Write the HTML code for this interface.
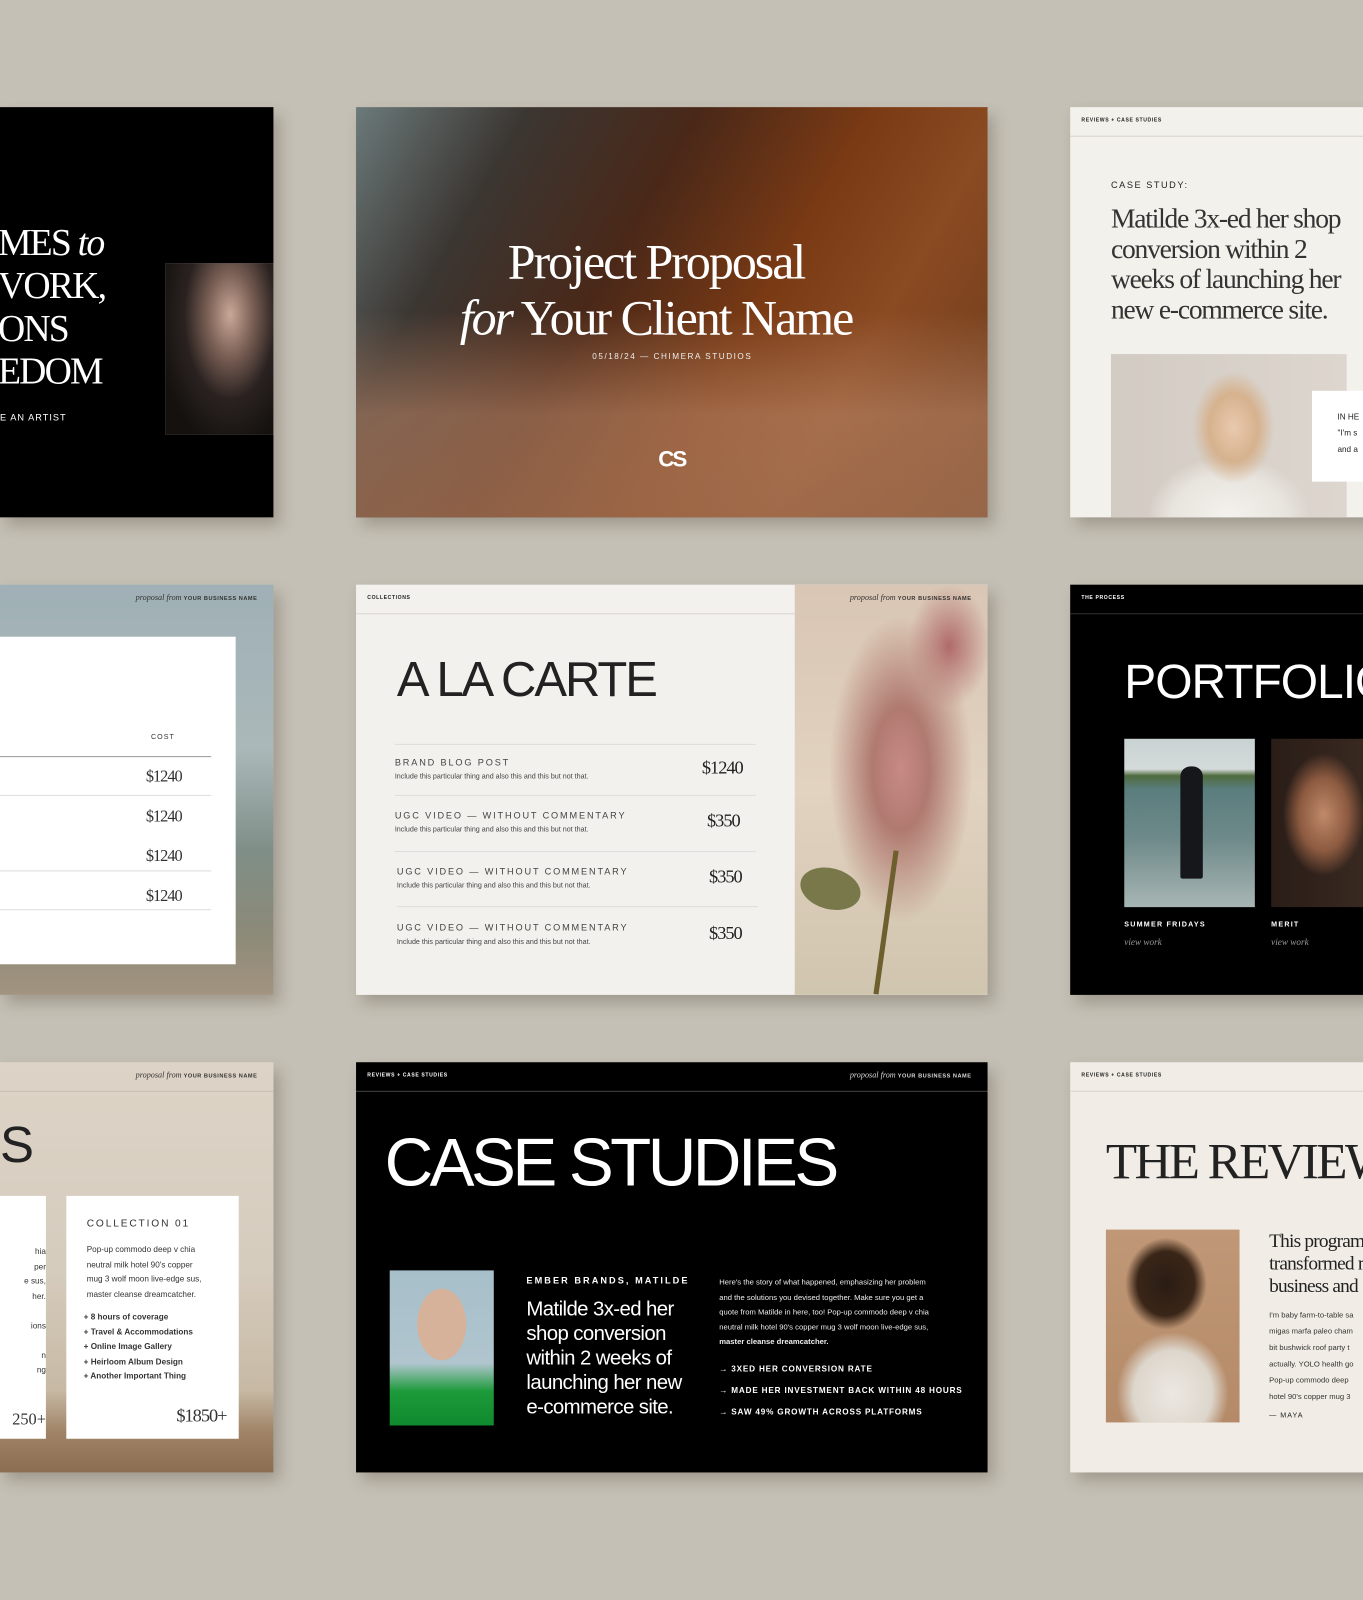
<!DOCTYPE html>
<html><head><meta charset="utf-8"><style>
*{margin:0;padding:0;box-sizing:border-box}
body{width:1363px;height:1600px;overflow:hidden;background:#c5c0b5;font-family:"Liberation Sans",sans-serif}
#w{position:absolute;left:0;top:0;width:1336px;height:1568px;transform:scale(1.0202,1.0204);transform-origin:0 0}
.c{position:absolute;overflow:hidden;box-shadow:6px 8px 14px rgba(60,50,40,.28)}
.a{position:absolute;white-space:nowrap}
.sf{font-family:"Liberation Serif",serif}
.t{font-size:6px;letter-spacing:.6px;font-weight:bold}
</style></head><body><div id="w">

<!-- A -->
<div class="c" style="left:0;top:105px;width:268px;height:402px;background:#000;color:#fff">
 <div class="a sf" style="left:-2px;top:113px;font-size:37px;line-height:42px;letter-spacing:-1.8px">MES <i>to</i><br>VORK,<br>ONS<br>EDOM</div>
 <div class="a" style="left:0;top:299px;font-size:9px;letter-spacing:1px">E AN ARTIST</div>
 <div class="a" style="left:162px;top:153px;width:106px;height:168px;background:radial-gradient(ellipse at 60% 30%,#c9a898 0,#7a5f55 25%,#2a2220 50%,#14110f 80%),#b7aca6"></div>
</div>

<!-- B -->
<div class="c" style="left:349px;top:105px;width:619px;height:402px;background:linear-gradient(120deg,#6b7a7a 0,#3b3632 20%,#4a2818 40%,#7a3a14 60%,#8a4a22 75%,#6a3a1c 100%)">
 <div class="a" style="left:0;top:200px;width:619px;height:202px;background:linear-gradient(180deg,rgba(0,0,0,0) 0,rgba(190,140,110,.55) 50%,rgba(170,120,90,.7) 100%)"></div>
 <div class="a sf" style="left:0;top:124px;width:588px;text-align:center;color:#fff;font-size:49px;line-height:55px;letter-spacing:-2px">Project Proposal<br><i>for</i> Your Client Name</div>
 <div class="a" style="left:0;top:240px;width:620px;text-align:center;color:#eee;font-size:8px;letter-spacing:1.5px">05/18/24 — CHIMERA STUDIOS</div>
 <div class="a" style="left:0;top:332px;width:619px;text-align:center;color:#fff;font-size:22px;font-weight:bold;letter-spacing:-2px">CS</div>
</div>

<!-- C -->
<div class="c" style="left:1049px;top:105px;width:300px;height:402px;background:#f3f1ec;color:#222">
 <div class="a t" style="left:11px;top:10px;font-size:5px">REVIEWS + CASE STUDIES</div>
 <div class="a" style="left:0;top:28px;width:300px;height:1px;background:#d6d2ca"></div>
 <div class="a" style="left:40px;top:71px;font-size:9px;letter-spacing:1.5px">CASE STUDY:</div>
 <div class="a sf" style="left:40px;top:95px;font-size:27px;line-height:29.5px;letter-spacing:-1.2px;color:#333">Matilde 3x-ed her shop<br>conversion within 2<br>weeks of launching her<br>new e-commerce site.</div>
 <div class="a" style="left:40px;top:242px;width:231px;height:160px;background:radial-gradient(ellipse 40px 55px at 52% 45%,#e9c9ae 0,#d6b28e 60%,rgba(0,0,0,0) 100%),radial-gradient(ellipse 80px 60px at 50% 100%,#f4f2ee 0,#e8e4de 70%,rgba(0,0,0,0) 100%),linear-gradient(90deg,#d2cbc3,#ddd6cf)"></div>
 <div class="a" style="left:237px;top:278px;width:60px;height:89px;background:#fff;font-size:8px;line-height:16px;padding:18px 0 0 25px">IN HE<br>"I'm s<br>and a</div>
</div>

<!-- D -->
<div class="c" style="left:0;top:573px;width:268px;height:402px;background:linear-gradient(180deg,#9fb0b6 0,#aab8b9 40%,#7f8e87 65%,#8c8a78 85%,#a29480 100%)">
 <div class="a sf" style="left:133px;top:8px;font-size:8px;color:#333"><i>proposal from</i> <span style="font-family:'Liberation Sans';font-size:5.5px;font-weight:bold;letter-spacing:.5px">YOUR BUSINESS NAME</span></div>
 <div class="a" style="left:0;top:51px;width:231px;height:321px;background:#fff;color:#333">
  <div class="a" style="left:148px;top:95px;font-size:7px;letter-spacing:1px">COST</div>
  <div class="a" style="left:0;top:117px;width:207px;height:1px;background:#999"></div>
  <div class="a" style="left:0;top:155px;width:207px;height:1px;background:#ddd"></div>
  <div class="a" style="left:0;top:229px;width:207px;height:1px;background:#ddd"></div>
  <div class="a" style="left:0;top:267px;width:207px;height:1px;background:#ddd"></div>
  <div class="a sf" style="left:143px;top:118px;font-size:16px;line-height:39px;letter-spacing:-1px">$1240<br>$1240<br>$1240<br>$1240</div>
 </div>
</div>

<!-- E -->
<div class="c" style="left:349px;top:573px;width:619px;height:402px;background:#f3f1ed;color:#222">
 <div class="a" style="left:430px;top:0;width:189px;height:402px;background:radial-gradient(ellipse 70px 150px at 55% 45%,#c88a86 0,#b07a70 40%,rgba(0,0,0,0) 100%),radial-gradient(ellipse 40px 60px at 80% 15%,#b06a6a,rgba(0,0,0,0)),linear-gradient(180deg,#d9c6b4 0,#e2d2c0 50%,#d0c5ae 100%)"></div>
 <div class="a" style="left:517px;top:260px;width:5px;height:142px;background:#6d5f2e;transform:rotate(8deg)"></div>
 <div class="a" style="left:435px;top:278px;width:60px;height:40px;border-radius:50%;background:#78784a;transform:rotate(15deg)"></div>
 <div class="a t" style="left:11px;top:10px;font-size:5px">COLLECTIONS</div>
 <div class="a" style="left:0;top:28px;width:430px;height:1px;background:#d9d5cd"></div>
 <div class="a sf" style="left:484px;top:8px;font-size:8px;color:#333"><i>proposal from</i> <span style="font-family:'Liberation Sans';font-size:5.5px;font-weight:bold;letter-spacing:.5px">YOUR BUSINESS NAME</span></div>
 <div class="a" style="left:40px;top:66px;font-size:48px;letter-spacing:-2px;font-weight:300">A LA CARTE</div>
 <div class="a" style="left:38px;top:156px;width:354px;height:1px;background:#ddd"></div>
 <div class="a" style="left:38px;top:206px;width:354px;height:1px;background:#ddd"></div>
 <div class="a" style="left:38px;top:261px;width:354px;height:1px;background:#ddd"></div>
 <div class="a" style="left:40px;top:315px;width:354px;height:1px;background:#ddd"></div>
 <div class="a" style="left:38px;top:169px;font-size:9px;letter-spacing:1.8px;color:#444">BRAND BLOG POST</div>
 <div class="a" style="left:38px;top:185px;font-size:7px;color:#444">Include this particular thing and also this and this but not that.</div>
 <div class="a sf" style="left:339px;top:169px;font-size:18px;letter-spacing:-1px">$1240</div>
 <div class="a" style="left:38px;top:221px;font-size:9px;letter-spacing:1.8px;color:#444">UGC VIDEO — WITHOUT COMMENTARY</div>
 <div class="a" style="left:38px;top:237px;font-size:7px;color:#444">Include this particular thing and also this and this but not that.</div>
 <div class="a sf" style="left:344px;top:221px;font-size:18px;letter-spacing:-1px">$350</div>
 <div class="a" style="left:40px;top:276px;font-size:9px;letter-spacing:1.8px;color:#444">UGC VIDEO — WITHOUT COMMENTARY</div>
 <div class="a" style="left:40px;top:292px;font-size:7px;color:#444">Include this particular thing and also this and this but not that.</div>
 <div class="a sf" style="left:346px;top:276px;font-size:18px;letter-spacing:-1px">$350</div>
 <div class="a" style="left:40px;top:331px;font-size:9px;letter-spacing:1.8px;color:#444">UGC VIDEO — WITHOUT COMMENTARY</div>
 <div class="a" style="left:40px;top:347px;font-size:7px;color:#444">Include this particular thing and also this and this but not that.</div>
 <div class="a sf" style="left:346px;top:331px;font-size:18px;letter-spacing:-1px">$350</div>
</div>

<!-- F -->
<div class="c" style="left:1049px;top:573px;width:300px;height:402px;background:#000;color:#fff">
 <div class="a t" style="left:11px;top:10px;font-size:5px">THE PROCESS</div>
 <div class="a" style="left:0;top:28px;width:300px;height:1px;background:#333"></div>
 <div class="a" style="left:53px;top:67px;font-size:47px;letter-spacing:-1px">PORTFOLIO</div>
 <div class="a" style="left:53px;top:151px;width:128px;height:165px;background:linear-gradient(180deg,#c9d2d2 0,#d4dada 18%,#4f6b3d 22%,#5a7d7e 30%,#6f8a8a 60%,#a7b6b4 100%)"></div>
 <div class="a" style="left:108px;top:178px;width:22px;height:110px;background:#15171a;border-radius:10px 10px 2px 2px"></div>
 <div class="a" style="left:197px;top:151px;width:103px;height:165px;background:radial-gradient(ellipse 40px 60px at 50% 45%,#c08a6a 0,#8c5a40 60%,rgba(0,0,0,0) 100%),linear-gradient(90deg,#2a1d17,#3a2a22)"></div>
 <div class="a" style="left:53px;top:330px;font-size:7px;letter-spacing:1.2px;font-weight:bold">SUMMER FRIDAYS</div>
 <div class="a sf" style="left:53px;top:345px;font-size:9px;color:#999"><i>view work</i></div>
 <div class="a" style="left:197px;top:330px;font-size:7px;letter-spacing:1.2px;font-weight:bold">MERIT</div>
 <div class="a sf" style="left:197px;top:345px;font-size:9px;color:#999"><i>view work</i></div>
</div>

<!-- G -->
<div class="c" style="left:0;top:1041px;width:268px;height:402px;background:linear-gradient(180deg,#ddd3c6 0,#d6ccbe 50%,#c7b9a4 80%,#a08468 90%,#8b6d52 100%)">
 <div class="a sf" style="left:133px;top:8px;font-size:8px;color:#333"><i>proposal from</i> <span style="font-family:'Liberation Sans';font-size:5.5px;font-weight:bold;letter-spacing:.5px">YOUR BUSINESS NAME</span></div>
 <div class="a" style="left:0;top:28px;width:268px;height:1px;background:#c8beb2"></div>
 <div class="a" style="left:0;top:52px;font-size:50px;color:#222">S</div>
 <div class="a" style="left:0;top:131px;width:45px;height:238px;background:#fff;font-size:8px;line-height:14.5px;color:#333;text-align:right;padding:48px 0 0 0">hia<br>per<br>e sus,<br>her.<br><br>ions<br><br>n<br>ng<br><br><span class="sf" style="font-size:16px;position:relative;top:20px">250+</span></div>
 <div class="a" style="left:65px;top:131px;width:169px;height:238px;background:#fff;color:#333;padding:0 0 0 20px">
  <div style="margin-top:22px;font-size:10px;letter-spacing:1.8px">COLLECTION 01</div>
  <div style="margin-top:13px;font-size:8px;line-height:14.5px">Pop-up commodo deep v chia<br>neutral milk hotel 90's copper<br>mug 3 wolf moon live-edge sus,<br>master cleanse dreamcatcher.</div>
  <div style="margin-top:8px;margin-left:-3px;font-size:8px;line-height:14.5px;font-weight:bold">+ 8 hours of coverage<br>+ Travel &amp; Accommodations<br>+ Online Image Gallery<br>+ Heirloom Album Design<br>+ Another Important Thing</div>
  <div class="sf" style="position:absolute;right:12px;top:205px;font-size:18px;letter-spacing:-1px">$1850+</div>
 </div>
</div>

<!-- H -->
<div class="c" style="left:349px;top:1041px;width:619px;height:402px;background:#000;color:#fff">
 <div class="a t" style="left:11px;top:10px;font-size:5px">REVIEWS + CASE STUDIES</div>
 <div class="a sf" style="left:484px;top:8px;font-size:8px;color:#ddd"><i>proposal from</i> <span style="font-family:'Liberation Sans';font-size:5.5px;font-weight:bold;letter-spacing:.5px">YOUR BUSINESS NAME</span></div>
 <div class="a" style="left:0;top:28px;width:619px;height:1px;background:#444"></div>
 <div class="a" style="left:28px;top:60px;font-size:66px;letter-spacing:-3.5px;font-weight:300">CASE STUDIES</div>
 <div class="a" style="left:33px;top:204px;width:102px;height:152px;background:linear-gradient(180deg,#a7bfca 0,#b0c5ce 60%,#1d9a3a 78%,#0f8a2e 100%)"></div>
 <div class="a" style="left:60px;top:222px;width:48px;height:70px;border-radius:50%;background:#d6b29a"></div>
 <div class="a" style="left:167px;top:209px;font-size:9px;letter-spacing:2px;font-weight:bold">EMBER BRANDS, MATILDE</div>
 <div class="a" style="left:167px;top:230px;font-size:20px;line-height:24px;letter-spacing:-.6px;font-weight:300">Matilde 3x-ed her<br>shop conversion<br>within 2 weeks of<br>launching her new<br>e-commerce site.</div>
 <div class="a" style="left:356px;top:209px;font-size:7.5px;line-height:14.6px;color:#eee">Here's the story of what happened, emphasizing her problem<br>and the solutions you devised together. Make sure you get a<br>quote from Matilde in here, too! Pop-up commodo deep v chia<br>neutral milk hotel 90's copper mug 3 wolf moon live-edge sus,<br><b>master cleanse dreamcatcher.</b></div>
 <div class="a" style="left:356px;top:290px;font-size:8px;line-height:21px;letter-spacing:.8px;font-weight:bold">→ 3XED HER CONVERSION RATE<br>→ MADE HER INVESTMENT BACK WITHIN 48 HOURS<br>→ SAW 49% GROWTH ACROSS PLATFORMS</div>
</div>

<!-- I -->
<div class="c" style="left:1049px;top:1041px;width:300px;height:402px;background:#f1ede6;color:#222">
 <div class="a t" style="left:11px;top:10px;font-size:5px">REVIEWS + CASE STUDIES</div>
 <div class="a" style="left:0;top:28px;width:300px;height:1px;background:#d9d4cb"></div>
 <div class="a sf" style="left:35px;top:68px;font-size:50px;letter-spacing:-2.5px">THE REVIEW</div>
 <div class="a" style="left:35px;top:164px;width:131px;height:189px;background:radial-gradient(ellipse 40px 45px at 45% 28%,#2a1c14 0,#3a2618 70%,rgba(0,0,0,0) 100%),radial-gradient(ellipse 55px 60px at 50% 85%,#ece8e2 0,#ddd6cc 70%,rgba(0,0,0,0) 100%),linear-gradient(180deg,#c19877,#b48a68)"></div>
 <div class="a sf" style="left:195px;top:165px;font-size:19px;line-height:22px;letter-spacing:-.8px">This program<br>transformed m<br>business and</div>
 <div class="a" style="left:195px;top:240px;font-size:7.5px;line-height:16px;color:#333">I'm baby farm-to-table sa<br>migas marfa paleo cham<br>bit bushwick roof party t<br>actually. YOLO health go<br>Pop-up commodo deep<br>hotel 90's copper mug 3</div>
 <div class="a" style="left:195px;top:343px;font-size:7px;letter-spacing:1px">— MAYA</div>
</div>

</div></body></html>
